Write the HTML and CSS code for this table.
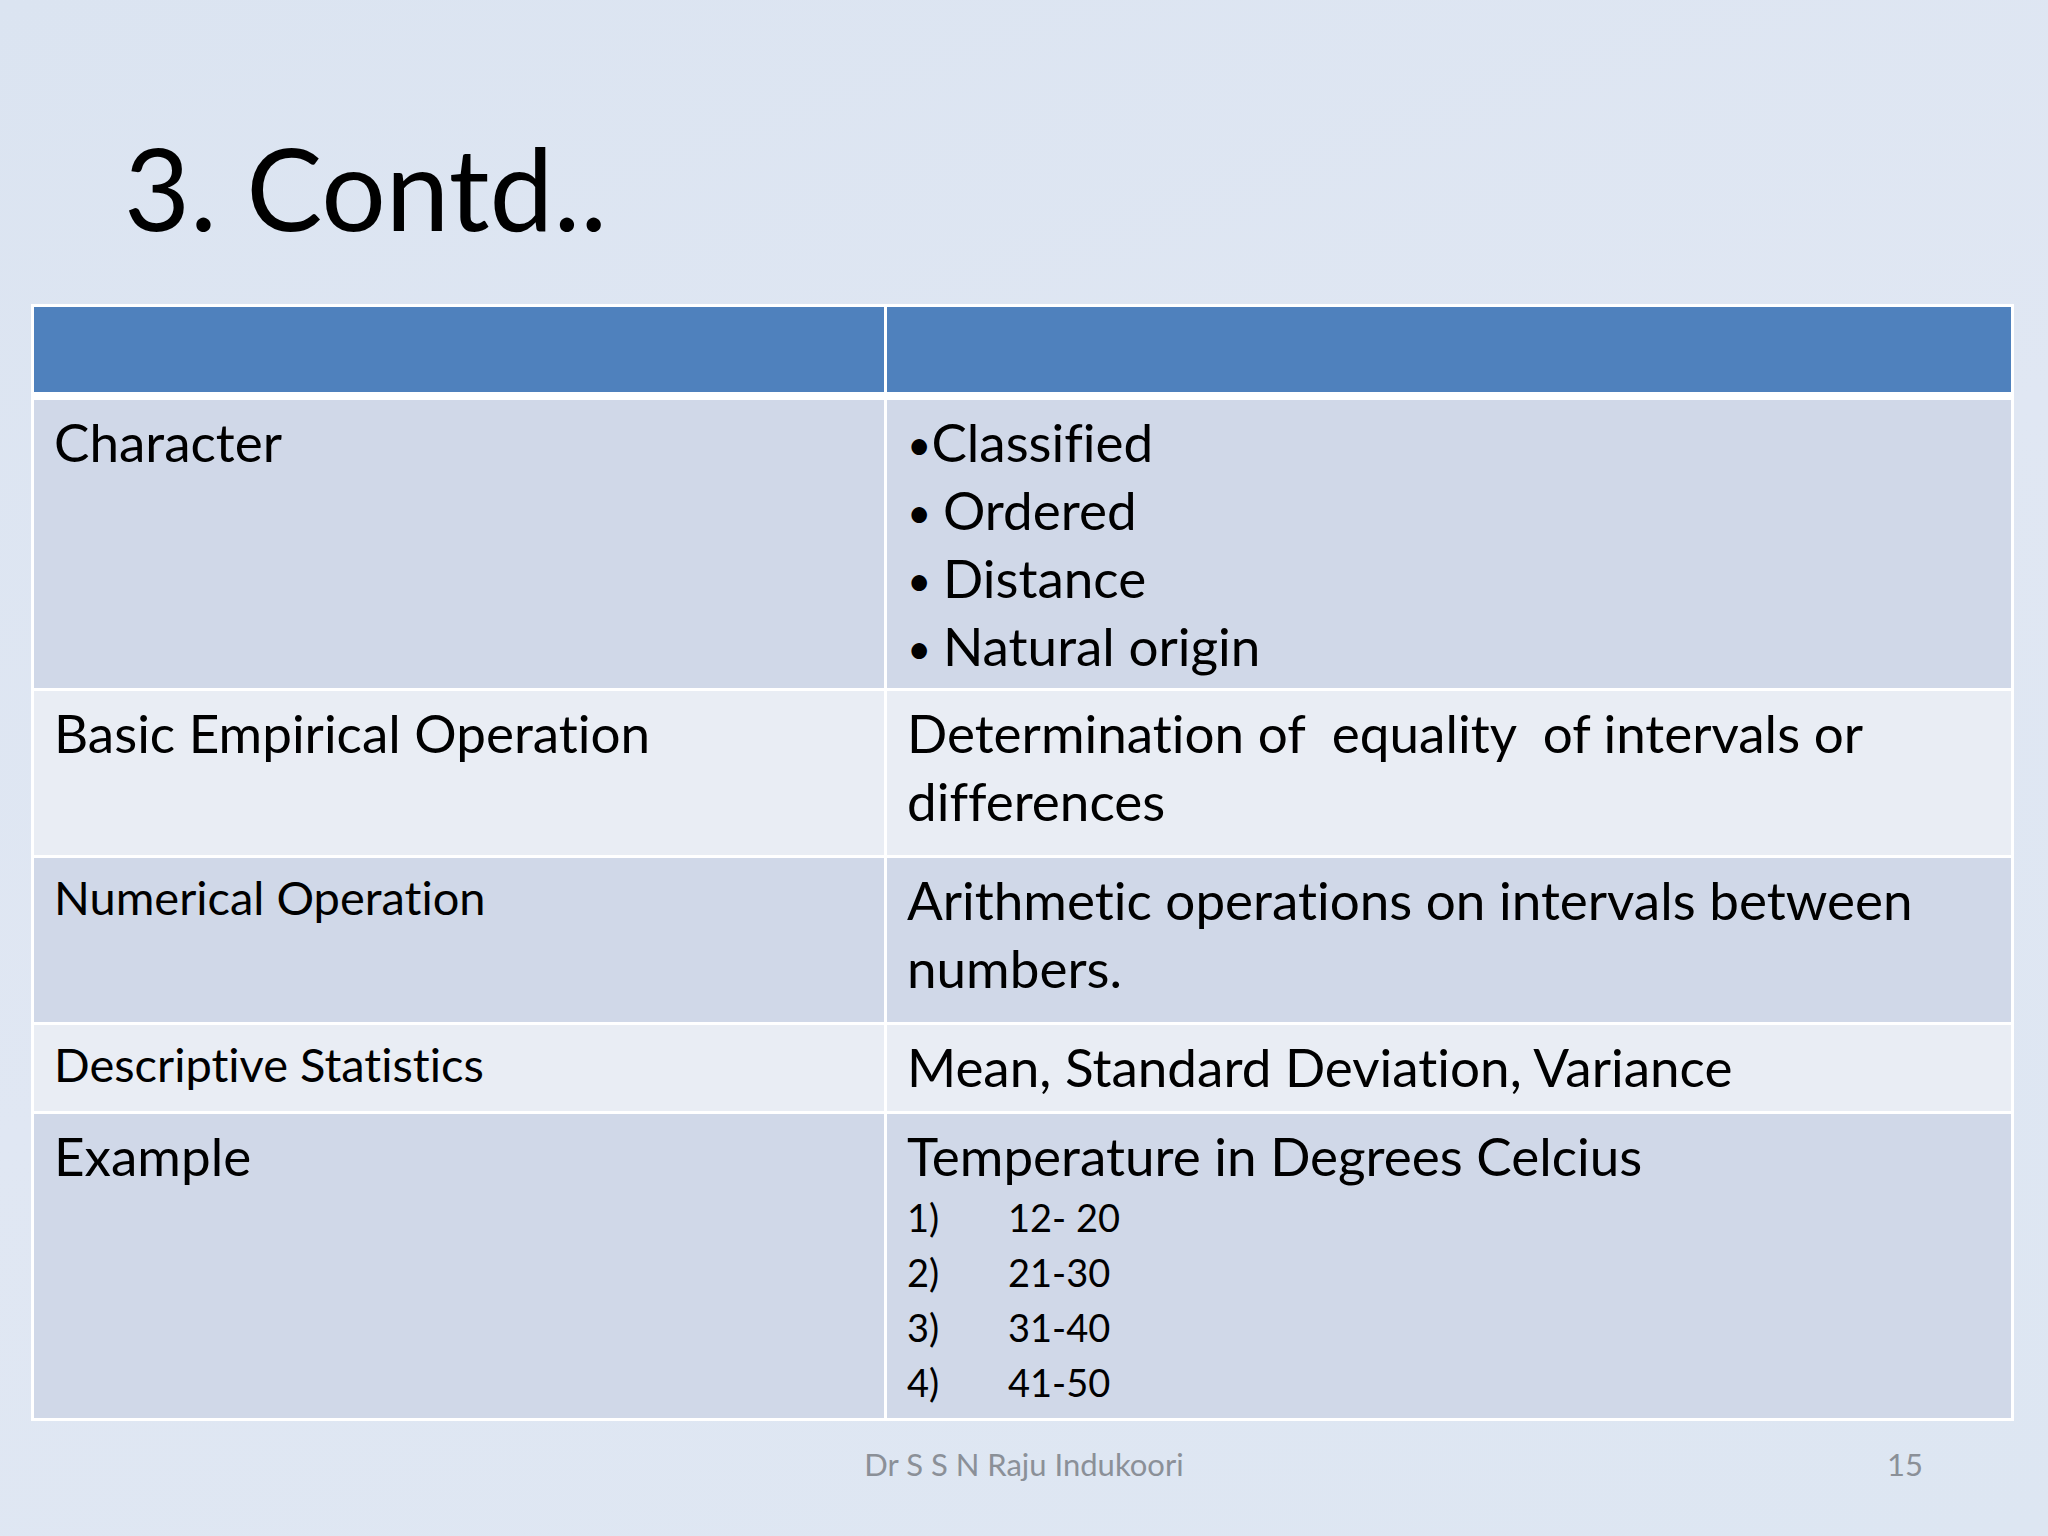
FILE: index.html
```html
<!DOCTYPE html>
<html lang="en">
<head>
<meta charset="utf-8">
<title>3. Contd..</title>
<link rel="stylesheet" href="styles.css">
</head>
<body>
<div class="slide">
  <h1 class="title">3. Contd..</h1>
  <div class="grid">
    <div class="cell head"></div>
    <div class="cell head"></div>

    <div class="cell band"><p class="line">Character</p></div>
    <div class="cell band">
      <p class="line"><span class="dot">•</span>Classified</p>
      <p class="line"><span class="dot wide">•</span> Ordered</p>
      <p class="line"><span class="dot wide">•</span> Distance</p>
      <p class="line"><span class="dot wide">•</span> Natural origin</p>
    </div>

    <div class="cell plain"><p class="line">Basic Empirical Operation</p></div>
    <div class="cell plain">
      <p class="line">Determination of&nbsp; equality&nbsp; of intervals or differences</p>
    </div>

    <div class="cell band small"><p class="line">Numerical Operation</p></div>
    <div class="cell band">
      <p class="line">Arithmetic operations on intervals between numbers.</p>
    </div>

    <div class="cell plain small"><p class="line">Descriptive Statistics</p></div>
    <div class="cell plain"><p class="line">Mean, Standard Deviation, Variance</p></div>

    <div class="cell band"><p class="line">Example</p></div>
    <div class="cell band">
      <p class="line">Temperature in Degrees Celcius</p>
      <ol class="nums">
        <li class="num"><span class="mark">1)</span><span>12- 20</span></li>
        <li class="num"><span class="mark">2)</span><span>21-30</span></li>
        <li class="num"><span class="mark">3)</span><span>31-40</span></li>
        <li class="num"><span class="mark">4)</span><span>41-50</span></li>
      </ol>
    </div>
  </div>
  <footer class="foot">
    <span></span>
    <span class="author">Dr S S N Raju Indukoori</span>
    <span class="page">15</span>
  </footer>
</div>
</body>
</html>
```

FILE: styles.css
```css
html, body {
  margin: 0;
  padding: 0;
}

body {
  width: 2048px;
  height: 1536px;
  overflow: hidden;
  font-family: Lato, "Open Sans", sans-serif;
  font-variant-ligatures: none;
  color: #000;
}

.slide {
  width: 2048px;
  height: 1536px;
  box-sizing: border-box;
  padding: 119px 0 0 0;
  background: linear-gradient(160deg, #dbe4f1 0%, #e0e7f3 50%, #dde6f2 100%);
  display: flex;
  flex-direction: column;
}

.title {
  margin: 0 0 48px 124px;
  font-weight: 400;
  font-size: 114px;
  line-height: 1.2;
  height: 137px;
}

.grid {
  margin-left: 31px;
  width: 1983px;
  box-sizing: border-box;
  padding: 3px;
  background: #ffffff;
  display: grid;
  grid-template-columns: 850px 1124px;
  grid-template-rows: 90px 288px 164px 164px 86px 304px;
  gap: 3px;
}

.cell {
  box-sizing: border-box;
  padding: 8px 20px 0 20px;
  font-size: 53px;
  line-height: 68px;
}

.head {
  background: #4f81bd;
  border-bottom: 5px solid #ffffff;
}

.band {
  background: #d0d8e8;
}

.plain {
  background: #e9edf4;
}

.small {
  padding-top: 9px;
  font-size: 47px;
  line-height: 60px;
}

.line {
  margin: 0;
}

.dot {
  font-size: 42px;
  line-height: 1;
  vertical-align: 2px;
}

.dot.wide {
  margin-right: -2px;
}

.nums {
  list-style: none;
  margin: 0;
  padding: 0;
  font-size: 38px;
  line-height: 55px;
}

.num {
  display: flex;
}

.mark {
  width: 101px;
  flex: none;
}

.foot {
  margin-top: 25px;
  display: grid;
  grid-template-columns: 1fr auto 1fr;
  font-size: 31px;
  line-height: 1.2;
  color: #8b9098;
}

.page {
  text-align: right;
  padding-right: 125px;
}
```
